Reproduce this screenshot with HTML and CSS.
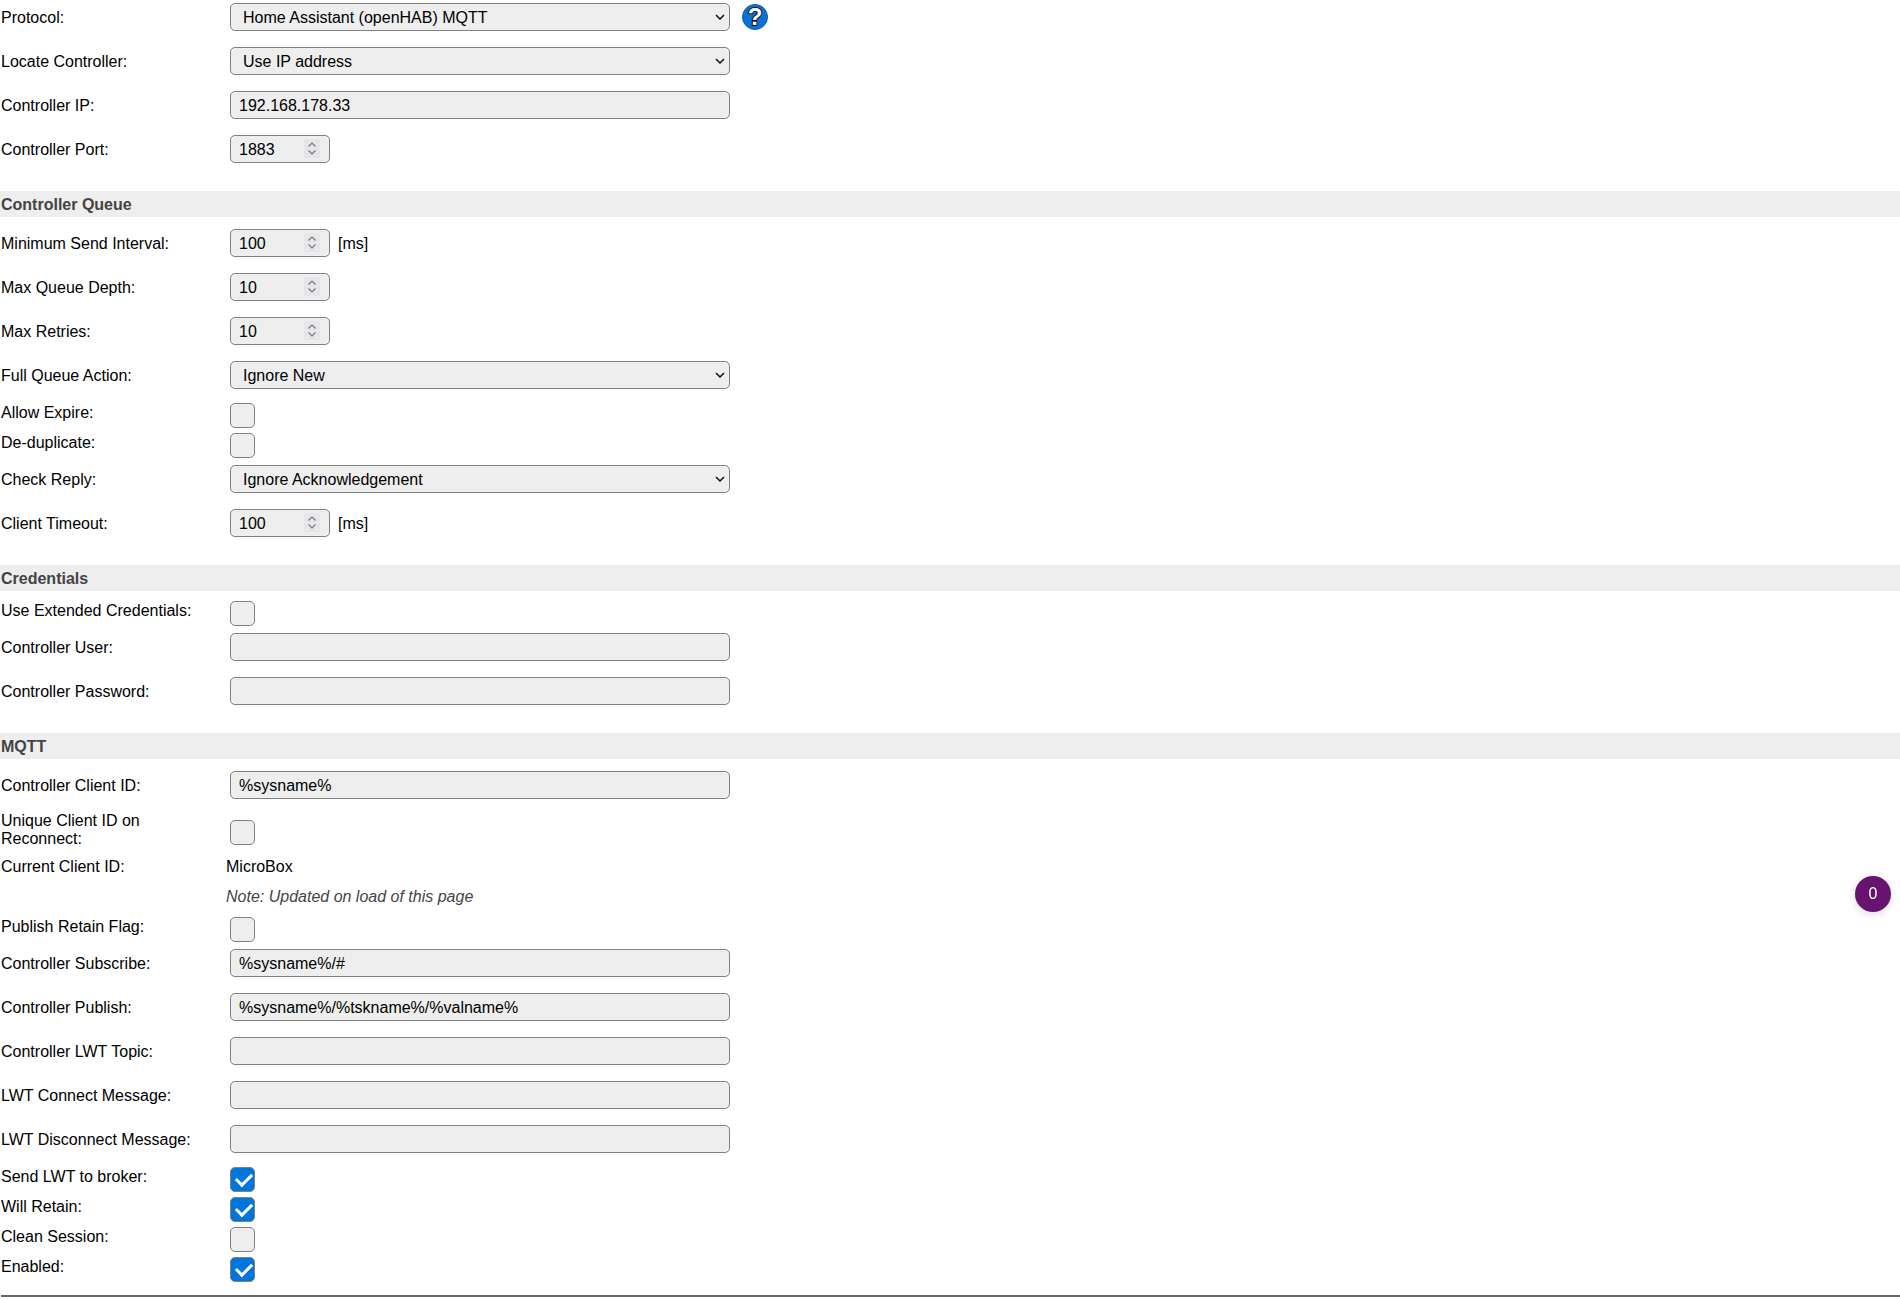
FILE: index.html
```html
<!DOCTYPE html>
<html lang="en">
<head>
<meta charset="utf-8">
<title>Controller settings</title>
<link rel="stylesheet" href="styles.css">
</head>
<body>
<form class="form">
  <div class="row row-first"><span class="label">Protocol:</span><select class="field"><option>Home Assistant (openHAB) MQTT</option></select>
    <a class="help" href="#"><svg width="26" height="26" viewBox="0 0 26 26"><circle cx="13" cy="13" r="12.5" fill="#0b72d2" stroke="#0a5aa5"/><text x="13" y="21" text-anchor="middle" class="help-q">?</text></svg></a></div>
  <div class="row"><span class="label">Locate Controller:</span><select class="field"><option>Use IP address</option></select></div>
  <div class="row"><span class="label">Controller IP:</span><input class="field" type="text" value="192.168.178.33"></div>
  <div class="row"><span class="label">Controller Port:</span><input class="num" type="number" value="1883"></div>

  <h3 class="section">Controller Queue</h3>
  <div class="row"><span class="label">Minimum Send Interval:</span><input class="num" type="number" value="100"><span class="unit">[ms]</span></div>
  <div class="row"><span class="label">Max Queue Depth:</span><input class="num" type="number" value="10"></div>
  <div class="row"><span class="label">Max Retries:</span><input class="num" type="number" value="10"></div>
  <div class="row"><span class="label">Full Queue Action:</span><select class="field"><option>Ignore New</option></select></div>
  <div class="row row-check"><span class="label">Allow Expire:</span><input class="check" type="checkbox"></div>
  <div class="row row-check"><span class="label">De-duplicate:</span><input class="check" type="checkbox"></div>
  <div class="row"><span class="label">Check Reply:</span><select class="field"><option>Ignore Acknowledgement</option></select></div>
  <div class="row"><span class="label">Client Timeout:</span><input class="num" type="number" value="100"><span class="unit">[ms]</span></div>

  <h3 class="section">Credentials</h3>
  <div class="row row-check"><span class="label">Use Extended Credentials:</span><input class="check" type="checkbox"></div>
  <div class="row"><span class="label">Controller User:</span><input class="field" type="text"></div>
  <div class="row"><span class="label">Controller Password:</span><input class="field" type="password"></div>

  <h3 class="section">MQTT</h3>
  <div class="row"><span class="label">Controller Client ID:</span><input class="field" type="text" value="%sysname%"></div>
  <div class="row row-wrap"><span class="label">Unique Client ID on Reconnect:</span><input class="check" type="checkbox"></div>
  <div class="row row-text"><span class="label">Current Client ID:</span><span class="value">MicroBox</span></div>
  <div class="row row-text"><span class="label"></span><span class="value note">Note: Updated on load of this page</span></div>
  <div class="row row-check"><span class="label">Publish Retain Flag:</span><input class="check" type="checkbox"></div>
  <div class="row"><span class="label">Controller Subscribe:</span><input class="field" type="text" value="%sysname%/#"></div>
  <div class="row"><span class="label">Controller Publish:</span><input class="field" type="text" value="%sysname%/%tskname%/%valname%"></div>
  <div class="row"><span class="label">Controller LWT Topic:</span><input class="field" type="text"></div>
  <div class="row"><span class="label">LWT Connect Message:</span><input class="field" type="text"></div>
  <div class="row"><span class="label">LWT Disconnect Message:</span><input class="field" type="text"></div>
  <div class="row row-check"><span class="label">Send LWT to broker:</span><input class="check" type="checkbox" checked></div>
  <div class="row row-check"><span class="label">Will Retain:</span><input class="check" type="checkbox" checked></div>
  <div class="row row-check"><span class="label">Clean Session:</span><input class="check" type="checkbox"></div>
  <div class="row row-check"><span class="label">Enabled:</span><input class="check" type="checkbox" checked></div>
  <hr class="rule">
</form>
<div class="badge">0</div>
</body>
</html>
```
FILE: styles.css
```css
* { box-sizing: border-box; }
html, body { margin: 0; padding: 0; background: #fff; }
body { font-family: "Liberation Sans", Arial, sans-serif; font-size: 16px; line-height: 18px; color: #000; overflow: hidden; height: 1300px; }
.row { display: flex; align-items: center; height: 44px; padding-left: 1px; }
.row-first { height: 34px; margin-bottom: 5px; }
.row-check { height: 30px; align-items: flex-start; padding-top: 6px; }
.row-text { height: 30px; }
.label { flex: none; width: 229px; padding: 2px 30px 0 0; }
.row-check .label { margin-top: -1px; }
.row-wrap .check { margin-top: 6px; }
.field, .num {
  height: 28px; border: 1px solid #808080; border-radius: 5px; background-color: #eee;
  font: inherit; color: #000; margin: 0; padding: 2px 8px 0;
}
.field { width: 500px; }
select.field {
  appearance: none; padding: 2px 8px 0 12px;
  background-image: url("data:image/svg+xml,%3Csvg xmlns='http://www.w3.org/2000/svg' width='10' height='6' viewBox='0 0 10 6'%3E%3Cpath d='M1 1l4 4 4-4' fill='none' stroke='%23111' stroke-width='1.5'/%3E%3C/svg%3E");
  background-repeat: no-repeat; background-position: right 4px center;
}
.num { width: 100px; }
.num::-webkit-inner-spin-button {
  appearance: none; opacity: 1; width: 16px; height: 19px; margin: -2px 1px 0 0;
  background: #e6e6ea url("data:image/svg+xml,%3Csvg xmlns='http://www.w3.org/2000/svg' width='16' height='19' viewBox='0 0 16 19'%3E%3Cpath d='M4.5 7.5L8 4l3.5 3.5M4.5 11.5L8 15l3.5-3.5' fill='none' stroke='%23777' stroke-width='1.2'/%3E%3C/svg%3E") center no-repeat;
}
.unit { margin-left: 8px; padding-top: 2px; }
.value { margin-left: -4px; padding-top: 2px; }
.note { font-style: italic; color: #444; }
.help { display: block; margin-left: 12px; height: 26px; }
.help svg { display: block; }
.help-q { font-family: "Liberation Sans", sans-serif; font-weight: 700; font-size: 24px; fill: #fff; stroke: #111; stroke-width: 2; paint-order: stroke; }
.section { margin: 20px 0 4px; height: 26px; background: #eee; font-size: 16px; font-weight: 700; line-height: 28px; color: #444; padding-left: 1px; }
.check {
  appearance: none; width: 25px; height: 25px; margin: 0; border: 1px solid #808080; border-radius: 5px; background: #eee; position: relative;
}
.check:checked { background: #0075db; }
.check:checked::after {
  content: ""; position: absolute; left: 8px; top: 2px; width: 7px; height: 13px;
  border: solid #fff; border-width: 0 3.5px 3.5px 0; transform: rotate(45deg);
}
.rule { margin: 14px 0 0 1px; border: 0; border-top: 2px solid #666; }
.badge {
  position: fixed; left: 1855px; top: 876px; width: 36px; height: 36px; border-radius: 50%;
  background: #661470; color: #fff; text-align: center; line-height: 36px; font-size: 16px;
  box-shadow: 0 2px 8px rgba(0,0,0,.15);
}
```
